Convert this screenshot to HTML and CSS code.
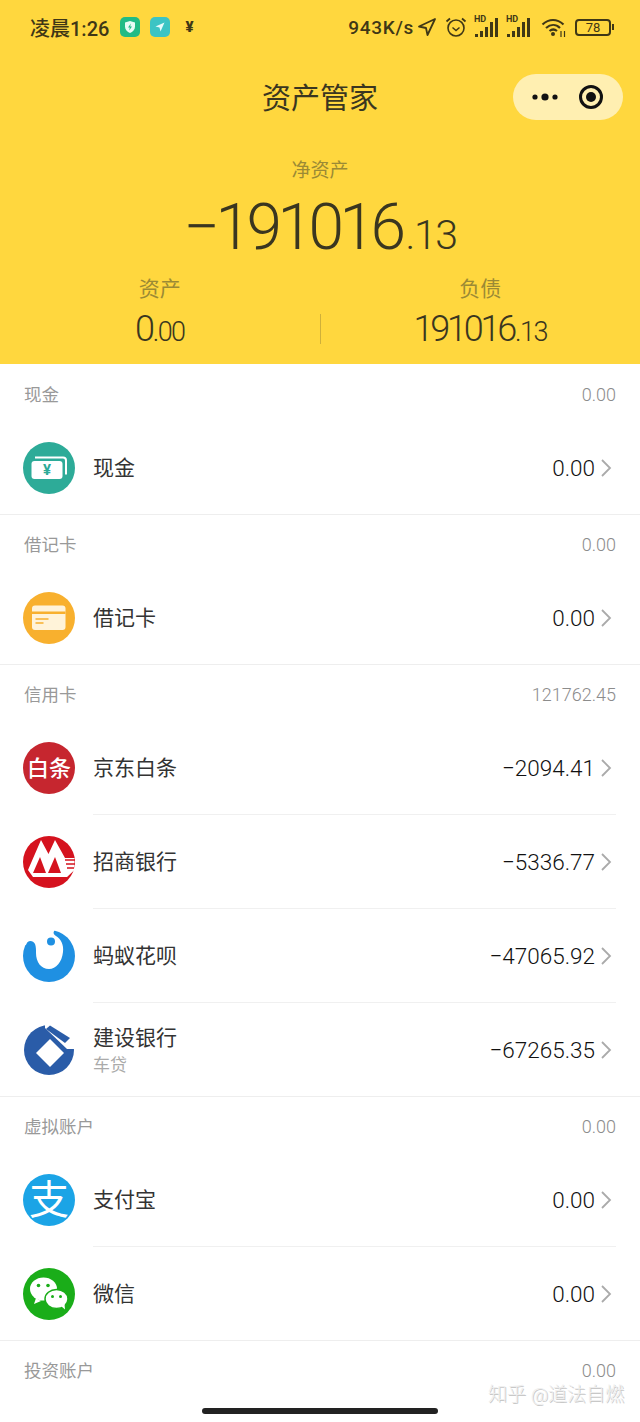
FILE: index.html
```html
<!DOCTYPE html>
<html lang="zh-CN">

<head>
  <title>资产管家</title>
  <meta charset="utf-8">
  <meta name="viewport" content="width=device-width, initial-scale=1.0">
  <link rel="stylesheet" href="styles.css">
</head>

<body>
  <div class="page">
    <header class="top">
      <div class="status-bar">
        <div class="status-left">
          <span class="clock">凌晨1:26</span>
          <svg class="app-icon" viewBox="0 0 20 20"><rect width="20" height="20" rx="5" fill="#22bb85"/><path d="M10 4l5 1.6v4.2c0 3-2.2 5-5 6.2-2.8-1.2-5-3.2-5-6.2V5.600z" fill="#e8fbf4"/><path d="M10.800 6.500L8 10.500h1.800l-.6 3 2.800-4h-1.800z" fill="#22bb85"/></svg>
          <svg class="app-icon" viewBox="0 0 20 20"><rect width="20" height="20" rx="5" fill="#3cc4c4"/><path d="M14.500 5.500L5.500 9.500l4 1 1 4z" fill="#e8fbfb"/></svg>
          <span class="yen-mini">¥</span>
        </div>
        <div class="status-right">
          <span class="speed">943K/s</span>
          <svg class="st-nav" viewBox="0 0 20 20"><path d="M18 2L2 9.500l7 1.500 1.500 7z" fill="none" stroke="#3f3716" stroke-width="1.800" stroke-linejoin="round"/></svg>
          <svg class="st-alarm" viewBox="0 0 22 22"><circle cx="11" cy="12" r="8" fill="none" stroke="#3f3716" stroke-width="1.600"/><path d="M7.500 11.500l3.500 3 3.500-3" fill="none" stroke="#3f3716" stroke-width="1.500"/><path d="M1.500 5.500L5 2.500M20.500 5.500L17 2.500" stroke="#3f3716" stroke-width="1.800"/></svg>
          <div class="signal">
            <span class="hd">HD</span>
            <svg viewBox="0 0 25 19"><path d="M1 16h3v3H1zM6 13h3v6H6zM11 9h3v10h-3zM16 4h3v15h-3zM21 0h3v19h-3z" fill="#3f3716"/></svg>
          </div>
          <div class="signal">
            <span class="hd">HD</span>
            <svg viewBox="0 0 25 19"><path d="M1 16h3v3H1zM6 13h3v6H6zM11 9h3v10h-3zM16 4h3v15h-3zM21 0h3v19h-3z" fill="#3f3716"/></svg>
          </div>
          <svg class="st-wifi" viewBox="0 0 26 20"><path d="M1.500 7.500c6.500-6 14.500-6 21 0M5 11c4.500-4 10-4 14 0M8.500 14c2.500-2 5-2 7.500 0" fill="none" stroke="#3f3716" stroke-width="2.200"/><circle cx="12" cy="17" r="2" fill="#3f3716"/><path d="M20 14v6M23.500 14v6" stroke="#3f3716" stroke-width="1.200"/></svg>
          <div class="battery"><span class="battery-body">78</span><span class="battery-tip"></span></div>
        </div>
      </div>

      <div class="title-bar">
        <h1 class="title">资产管家</h1>
        <div class="capsule">
          <svg class="cap-dots" viewBox="0 0 26 10"><circle cx="3" cy="5" r="2.600"/><circle cx="13" cy="5" r="3.600"/><circle cx="23" cy="5" r="2.600"/></svg>
          <svg class="cap-target" viewBox="0 0 26 26"><circle cx="13" cy="13" r="10.500" fill="none" stroke="#111" stroke-width="3"/><circle cx="13" cy="13" r="5" fill="#111"/></svg>
        </div>
      </div>

      <div class="net-label">净资产</div>
      <div class="net-value">−191016<span class="net-cents">.13</span></div>

      <div class="stats">
        <div class="stat">
          <div class="stat-label">资产</div>
          <div class="stat-value">0<span class="stat-cents">.00</span></div>
        </div>
        <div class="stat-line"></div>
        <div class="stat">
          <div class="stat-label">负债</div>
          <div class="stat-value">191016<span class="stat-cents">.13</span></div>
        </div>
      </div>
    </header>

    <section class="group group-first">
      <div class="group-head"><span>现金</span><span class="group-sum">0.00</span></div>
      <div class="row">
        <svg class="logo" viewBox="0 0 52 52">
          <circle cx="26" cy="26" r="26" fill="#2dab98"/>
          <path d="M12 15.500h28a3 3 0 0 1 3 3v14" fill="none" stroke="#fff" stroke-width="2"/>
          <rect x="8.500" y="19" width="31" height="18" rx="3" fill="#fff"/>
          <text x="24" y="33" class="logo-yen">¥</text>
        </svg>
        <div class="row-main"><div class="row-name">现金</div><div class="row-end"><span class="row-amount">0.00</span><svg class="chev" viewBox="0 0 12 18"><path d="M2 1l8 8-8 8" /></svg></div></div>
      </div>
    </section>

    <section class="group">
      <div class="group-head"><span>借记卡</span><span class="group-sum">0.00</span></div>
      <div class="row">
        <svg class="logo" viewBox="0 0 52 52">
          <circle cx="26" cy="26" r="26" fill="#f8b02e"/>
          <rect x="9" y="13.500" width="33.500" height="24.500" rx="3" fill="#fff3d9"/>
          <rect x="9" y="19.500" width="33.500" height="2.500" fill="#f8b02e"/>
          <path d="M12.500 27h13M12.500 31h8" stroke="#f8b02e" stroke-width="1.500"/>
        </svg>
        <div class="row-main"><div class="row-name">借记卡</div><div class="row-end"><span class="row-amount">0.00</span><svg class="chev" viewBox="0 0 12 18"><path d="M2 1l8 8-8 8" /></svg></div></div>
      </div>
    </section>

    <section class="group">
      <div class="group-head"><span>信用卡</span><span class="group-sum">121762.45</span></div>
      <div class="row">
        <svg class="logo" viewBox="0 0 52 52">
          <circle cx="26" cy="26" r="26" fill="#c6262f"/>
          <text x="26" y="33.500" class="logo-baitiao">白条</text>
        </svg>
        <div class="row-main"><div class="row-name">京东白条</div><div class="row-end"><span class="row-amount">−2094.41</span><svg class="chev" viewBox="0 0 12 18"><path d="M2 1l8 8-8 8" /></svg></div></div>
      </div>
      <div class="row">
        <svg class="logo" viewBox="0 0 52 52">
          <circle cx="26" cy="26" r="26" fill="#d5121e"/>
          <path d="M18 4l7.500 14L32 4l10 18h9.500v12L44 41H10l-5-7z" fill="#fff"/>
          <path d="M17 21l6 16H10zM32 21l6 16H25z" fill="#d5121e"/>
          <path d="M42 24h10M43 28h9M44 32h7" stroke="#d5121e" stroke-width="1.300"/>
        </svg>
        <div class="row-main"><div class="row-name">招商银行</div><div class="row-end"><span class="row-amount">−5336.77</span><svg class="chev" viewBox="0 0 12 18"><path d="M2 1l8 8-8 8" /></svg></div></div>
      </div>
      <div class="row">
        <svg class="logo" viewBox="0 0 52 52">
          <circle cx="26" cy="26" r="26" fill="#1f90e2"/>
          <path d="M0 0h32c-2 2-2 4 1 6 5 3 8 9 7 16-1 10-7 17-14 17-8 0-13-7-13-16 0-4 0-6-1-9-2-4-8-4-9 1H0z" fill="#fff"/>
          <circle cx="28" cy="11.500" r="4" fill="#1f90e2"/>
        </svg>
        <div class="row-main"><div class="row-name">蚂蚁花呗</div><div class="row-end"><span class="row-amount">−47065.92</span><svg class="chev" viewBox="0 0 12 18"><path d="M2 1l8 8-8 8" /></svg></div></div>
      </div>
      <div class="row">
        <svg class="logo" viewBox="0 0 52 52">
          <circle cx="26" cy="26" r="25" fill="#2a5ca8"/>
          <path d="M22 4l22 21h8V0H22z" fill="#fff"/>
          <path d="M27 1.500l20 12.500-5 5L23 5z" fill="#2a5ca8"/>
          <path d="M27 15l14 14-14 14-14-14z" fill="#fff"/>
        </svg>
        <div class="row-main"><div><div class="row-name">建设银行</div><div class="row-sub">车贷</div></div><div class="row-end"><span class="row-amount">−67265.35</span><svg class="chev" viewBox="0 0 12 18"><path d="M2 1l8 8-8 8" /></svg></div></div>
      </div>
    </section>

    <section class="group">
      <div class="group-head"><span>虚拟账户</span><span class="group-sum">0.00</span></div>
      <div class="row">
        <svg class="logo" viewBox="0 0 52 52">
          <circle cx="26" cy="26" r="26" fill="#1ba4e6"/>
          <text x="26" y="40" class="logo-zhi">支</text>
        </svg>
        <div class="row-main"><div class="row-name">支付宝</div><div class="row-end"><span class="row-amount">0.00</span><svg class="chev" viewBox="0 0 12 18"><path d="M2 1l8 8-8 8" /></svg></div></div>
      </div>
      <div class="row">
        <svg class="logo" viewBox="0 0 52 52">
          <circle cx="26" cy="26" r="26" fill="#1aad19"/>
          <ellipse cx="20.500" cy="21" rx="13.500" ry="11.500" fill="#fff"/>
          <path d="M13 30l-2 6 7-3z" fill="#fff"/>
          <circle cx="15.500" cy="17.500" r="1.800" fill="#1aad19"/>
          <circle cx="25" cy="17.500" r="1.800" fill="#1aad19"/>
          <ellipse cx="33.500" cy="31" rx="11.500" ry="9.500" fill="#fff" stroke="#1aad19" stroke-width="1.500"/>
          <path d="M38 38l4 3.500-.5-5.500z" fill="#fff"/>
          <circle cx="29.500" cy="28.500" r="1.500" fill="#1aad19"/>
          <circle cx="37.500" cy="28.500" r="1.500" fill="#1aad19"/>
        </svg>
        <div class="row-main"><div class="row-name">微信</div><div class="row-end"><span class="row-amount">0.00</span><svg class="chev" viewBox="0 0 12 18"><path d="M2 1l8 8-8 8" /></svg></div></div>
      </div>
    </section>

    <section class="group">
      <div class="group-head"><span>投资账户</span><span class="group-sum">0.00</span></div>
    </section>

    <div class="watermark">知乎 @道法自燃</div>
    <div class="home-bar"></div>
  </div>
</body>

</html>
```

FILE: styles.css
```css
* {
  box-sizing: border-box;
}

body {
  margin: 0;
  background-color: #fff;
  font-family: Roboto, "Noto Sans CJK SC", sans-serif;
}

.page {
  position: relative;
  width: 640px;
  height: 1422px;
  overflow: hidden;
}

.top {
  height: 364px;
  background-color: #ffd73e;
  color: #3a3620;
  text-align: center;
}

.status-bar {
  display: flex;
  justify-content: space-between;
  align-items: center;
  height: 54px;
  padding: 0 26px 0 30px;
  color: #3f3716;
}

.status-left,
.status-right {
  display: flex;
  align-items: center;
}

.clock {
  font-size: 20px;
  font-weight: 500;
  margin-right: 11px;
}

.app-icon {
  width: 20px;
  height: 20px;
  margin-right: 10px;
}

.yen-mini {
  margin-left: 5px;
  font-size: 15px;
  font-weight: 900;
}

.speed {
  font-size: 19px;
  font-weight: 500;
  letter-spacing: 0.7px;
  margin-right: 3px;
}

.st-nav {
  width: 20px;
  height: 20px;
  margin-right: 8px;
}

.st-alarm {
  width: 22px;
  height: 22px;
  margin-right: 7px;
}

.signal {
  position: relative;
  width: 25px;
  height: 19px;
  margin-right: 7px;
}

.signal svg {
  display: block;
  width: 25px;
  height: 19px;
}

.hd {
  position: absolute;
  top: -3px;
  left: 0;
  font-size: 9px;
  font-weight: 700;
  line-height: 9px;
}

.st-wifi {
  width: 26px;
  height: 20px;
  margin: 0 8px 0 3px;
}

.battery {
  display: flex;
  align-items: center;
}

.battery-body {
  width: 36px;
  height: 17px;
  border: 2px solid #3f3716;
  border-radius: 4px;
  font-size: 13px;
  line-height: 13px;
}

.battery-tip {
  width: 2px;
  height: 6px;
  margin-left: 1px;
  background-color: #3f3716;
}

.title-bar {
  position: relative;
  height: 90px;
}

.title {
  margin: 0;
  font-size: 29px;
  font-weight: 400;
  line-height: 91px;
}

.capsule {
  position: absolute;
  top: 20px;
  right: 17px;
  display: flex;
  align-items: center;
  justify-content: space-between;
  width: 110px;
  height: 46px;
  padding: 0 19px;
  border-radius: 23px;
  background-color: rgba(255, 255, 255, 0.6);
}

.cap-dots {
  width: 26px;
  height: 10px;
  fill: #111;
}

.cap-target {
  width: 26px;
  height: 26px;
}

.net-label {
  padding-top: 12px;
  font-size: 19px;
  line-height: 30px;
  color: #9b8a35;
}

.net-value {
  height: 87px;
  font-size: 64px;
  font-weight: 300;
  letter-spacing: -4.500px;
  line-height: 84px;
}

.net-cents {
  margin-left: 4px;
  font-size: 41px;
  letter-spacing: -1.500px;
}

.stats {
  display: flex;
  align-items: flex-end;
}

.stat {
  flex: 1;
}

.stat-label {
  font-size: 21px;
  line-height: 32px;
  color: #9b8a35;
}

.stat-value {
  font-size: 36px;
  font-weight: 300;
  letter-spacing: -3.200px;
  line-height: 48px;
}

.stat-cents {
  margin-left: 1px;
  font-size: 27px;
  letter-spacing: -1.500px;
}

.stat-line {
  width: 1px;
  height: 30px;
  margin-bottom: 12px;
  background-color: #cfb03a;
}

.group {
  border-bottom: 1px solid #eee;
}

.group:last-of-type {
  border-bottom: none;
}

.group-first {
  padding-top: 1px;
}

.group-head {
  display: flex;
  justify-content: space-between;
  height: 56px;
  padding: 17px 24px 0;
  font-size: 17.500px;
  line-height: 26px;
  color: #999;
}

.group-sum {
  font-weight: 300;
  font-size: 18px;
  color: #8c8c8c;
}

.row {
  display: flex;
  align-items: center;
  height: 94px;
  padding-left: 23px;
  padding-right: 24px;
}

.row:last-child {
  height: 93px;
}

.logo {
  flex: none;
  width: 52px;
  height: 52px;
  margin-right: 18px;
}

.logo-yen {
  font-size: 15px;
  font-weight: 700;
  text-anchor: middle;
  fill: #2dab98;
}

.logo-baitiao {
  font-size: 22px;
  font-weight: 500;
  text-anchor: middle;
  fill: #fff;
}

.logo-zhi {
  font-size: 40px;
  font-weight: 400;
  text-anchor: middle;
  fill: #fff;
}

.row-main {
  display: flex;
  flex: 1;
  align-items: center;
  justify-content: space-between;
  height: 100%;
  padding-right: 4px;
  border-bottom: 1px solid #f0f0f0;
}

.row:last-child .row-main {
  border-bottom: none;
}

.row-name {
  font-size: 21px;
  line-height: 30px;
  color: #333;
}

.row-sub {
  font-size: 17px;
  line-height: 24px;
  color: #aaa;
}

.row-end {
  display: flex;
  align-items: center;
}

.row-amount {
  font-size: 22.500px;
  font-weight: 300;
  color: #111;
}

.chev {
  width: 12px;
  height: 18px;
  margin-left: 5px;
  fill: none;
  stroke: #aaa;
  stroke-width: 1.800;
}

.watermark {
  position: absolute;
  right: 16px;
  bottom: 13px;
  font-size: 19px;
  font-weight: 300;
  line-height: 28px;
  color: #eee;
  text-shadow: 1px 1px 0 #c8c8c8;
}

.home-bar {
  position: absolute;
  left: 202px;
  bottom: 8px;
  width: 236px;
  height: 6px;
  border-radius: 3px;
  background-color: #222;
}
```
